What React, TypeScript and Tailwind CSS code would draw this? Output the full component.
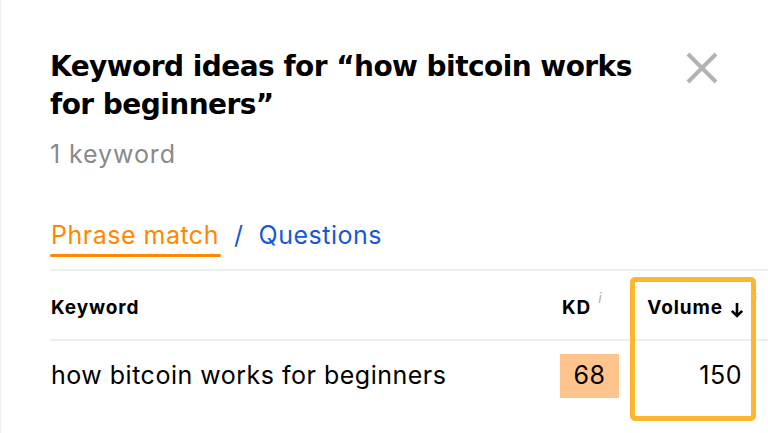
export default function App() {
  return (
    <div
      className="relative w-[768px] h-[433px] overflow-hidden bg-white border-l border-[#efefef]"
      style={{ fontFamily: "Inter, 'Liberation Sans', sans-serif" }}
    >
      <div className="flex items-start justify-between pl-[49px] pr-[50px] pt-[48px]">
        <h1
          className="text-[28px] leading-[38px] font-bold text-black tracking-[-0.55px]"
          style={{ fontFamily: "'DejaVu Sans', Inter, sans-serif" }}
        >
          Keyword ideas for “how bitcoin works
          <br />
          for beginners”
        </h1>
        <button className="mt-[4px] w-[32px] h-[32px] flex items-center justify-center">
          <svg width="32" height="32" viewBox="0 0 32 32">
            <path d="M2 2 L30 30 M30 2 L2 30" stroke="#b3b3b3" strokeWidth="4" fill="none" />
          </svg>
        </button>
      </div>
      <div className="pl-[49px] mt-[14px] text-[25px] leading-[32px] tracking-[0.9px] text-[#8a8a8a]">1 keyword</div>

      <div className="pl-[49px] mt-[49px] flex items-start gap-[13px] text-[25px] leading-[32px] tracking-[0.5px]">
        <div className="flex flex-col">
          <span className="text-[#ff8800] px-[1px]">Phrase match</span>
          <span className="mt-[3px] h-[3px] bg-[#ff8800] rounded-full w-[171px]" />
        </div>
        <span className="text-[#1758d6]">/ &nbsp;Questions</span>
      </div>

      <div className="ml-[49px] mt-[12px] border-t-2 border-[#eeeeee]">
        <div className="flex items-center h-[70px] pt-[7px] border-b-2 border-[#eeeeee] text-[19px] tracking-[0.9px] font-bold text-black">
          <div className="flex-1 pl-[1px]">Keyword</div>
          <div className="w-[82px] flex items-start pl-[14px]">
            KD<span className="ml-[7px] -mt-[7px] text-[14px] italic font-normal text-[#b0b0b0]">i</span>
          </div>
          <div className="w-[124px] flex items-center justify-end pr-[10px]">
            Volume
            <svg className="ml-[7px] mt-[3px]" width="14" height="16" viewBox="0 0 14 16">
              <path d="M7 1 V14 M1.8 8.8 L7 14 L12.2 8.8" stroke="#000" strokeWidth="2.6" fill="none" />
            </svg>
          </div>
          <div className="w-[14px] text-[14px] italic font-normal text-[#d8d8d8] self-start mt-[10px]">i</div>
        </div>
        <div className="flex items-center h-[70px] text-[25px] tracking-[0.5px] text-black">
          <div className="flex-1 pl-[1px]">how bitcoin works for beginners</div>
          <div className="w-[82px] flex">
            <span className="ml-[12px] w-[59px] h-[44px] flex items-center justify-center bg-[#ffc48c]">68</span>
          </div>
          <div className="w-[124px] text-right pr-[12px]">150</div>
          <div className="w-[14px]" />
        </div>
      </div>

      <div className="absolute left-[629px] top-[277px] w-[126px] h-[144px] border-[5px] border-[#fdb62f] rounded-[5px] pointer-events-none" />
    </div>
  );
}
